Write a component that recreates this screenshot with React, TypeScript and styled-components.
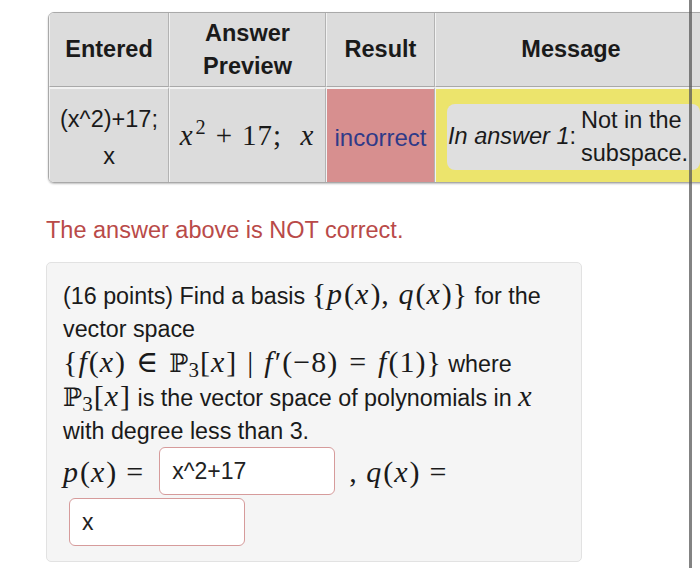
import styled, { createGlobalStyle } from 'styled-components';

const GlobalStyle = createGlobalStyle`
    html, body {
        margin: 0;
        padding: 0;
        background: #fff;
    }
    body {
        font-family: 'Liberation Sans', Arial, sans-serif;
        color: #1a1a1a;
    }
`;

const Page = styled.div`
    position: relative;
    width: 700px;
    height: 577px;
    overflow: hidden;
    padding: 12px 0 0 46px;
    box-sizing: border-box;
`;

// dark page edge that runs over the table on the right
const PageEdge = styled.div`
    position: absolute;
    left: 689px;
    top: 0;
    width: 3px;
    height: 568px;
    background: rgba(90, 90, 90, 0.75);
`;

const ResultsTable = styled.table`
    margin-left: 2px;
    width: 650px;
    border-collapse: separate;
    border-spacing: 0;
    border: 1px solid #a9a9a9;
    border-radius: 6px;
    box-shadow: 0 1px 2px rgba(0, 0, 0, 0.25);
    overflow: hidden;
    font-size: 23.5px;
    table-layout: fixed;
`;

const HeadCell = styled.th<{ $w: number }>`
    width: ${(p) => p.$w}px;
    height: 73px;
    padding: 0;
    background: #dcdcdc;
    font-weight: bold;
    line-height: 33px;
    text-align: center;
    vertical-align: middle;
    border-right: 1px solid #b3b3b3;
    border-left: 1px solid #f2f2f2;
    border-bottom: 1px solid #a9a9a9;

    &:last-child {
        border-right: none;
    }
`;

const Cell = styled.td<{ $tone?: 'plain' | 'bad' | 'warn' }>`
    height: 95px;
    padding: 4px 0 0 0;
    box-sizing: border-box;
    text-align: center;
    vertical-align: middle;
    line-height: 37px;
    border-top: 2px solid #f2f2f2;
    border-right: 1px solid #b3b3b3;
    border-left: 1px solid #f2f2f2;
    background: ${(p) =>
        p.$tone === 'bad' ? '#d78f8f' : p.$tone === 'warn' ? '#ece46c' : '#dcdcdc'};

    &:last-child {
        border-right: none;
    }
`;

const ResultText = styled.span`
    color: #2f3a88;
    font-size: 24px;
`;

const MessageBox = styled.div`
    margin: -2px 6px 0 11px;
    height: 66px;
    border-radius: 8px;
    background: #dfdfdf;
    display: flex;
    align-items: center;
    padding: 0 0 0 1px;
    gap: 5px;
    text-align: left;
    line-height: 33px;
`;

const MessageLabel = styled.span`
    font-style: italic;
`;

const MessageText = styled.span`
    display: block;
`;

const Math = styled.span<{ $size?: number }>`
    font-family: 'Liberation Serif', 'DejaVu Serif', serif;
    font-size: ${(p) => p.$size ?? 30}px;
    letter-spacing: 1px;
    line-height: 0.9;
    white-space: nowrap;
`;

const V = styled.i`
    font-style: italic;
    margin-right: 1px;
`;

const Op = styled.span<{ $space?: number }>`
    margin: 0 ${(p) => p.$space ?? 9}px;
`;

const Sym = styled.span`
    font-family: 'DejaVu Serif', serif;
    font-size: 0.85em;
    letter-spacing: 0;
`;

const Sup = styled.sup`
    font-size: 0.7em;
    vertical-align: 0.55em;
    line-height: 0;
    margin-left: 1px;
`;

const Sub = styled.sub`
    font-size: 0.7em;
    vertical-align: -0.25em;
    line-height: 0;
`;

const Notice = styled.p`
    margin: 31px 0 0 0;
    font-size: 23.5px;
    line-height: 33px;
    color: #b94a48;
`;

const ProblemBox = styled.div`
    margin-top: 15px;
    width: 536px;
    height: 300px;
    box-sizing: border-box;
    padding: 17px 16px 0 16px;
    background: #f5f5f5;
    border: 1px solid #e2e2e2;
    border-radius: 5px;
    font-size: 23.3px;
    line-height: 33px;
`;

const TextLine = styled.div<{ $h?: number }>`
    height: ${(p) => p.$h ?? 33}px;
    line-height: ${(p) => p.$h ?? 33}px;
    white-space: nowrap;
`;

const AnswerRow = styled.div`
    display: flex;
    flex-wrap: wrap;
    align-items: center;
    row-gap: 3px;
    margin-top: -1px;
`;

const AnswerInput = styled.input`
    width: 176px;
    height: 48px;
    box-sizing: border-box;
    padding: 0 12px;
    border: 1px solid #d69b9b;
    border-radius: 6px;
    background: #fff;
    font-family: 'Liberation Sans', Arial, sans-serif;
    font-size: 23px;
    color: #222;
    outline: none;
`;

const Label = styled.span<{ $lead?: number }>`
    display: inline-flex;
    align-items: center;
    margin-left: ${(p) => p.$lead ?? 0}px;
    margin-right: 6px;
`;

const SecondInput = styled(AnswerInput)`
    margin-left: 6px;
`;

export default function App() {
    return (
        <>
            <GlobalStyle />
            <Page>
                <ResultsTable>
                    <thead>
                        <tr>
                            <HeadCell $w={118}>Entered</HeadCell>
                            <HeadCell $w={155}>
                                Answer
                                <br />
                                Preview
                            </HeadCell>
                            <HeadCell $w={107}>Result</HeadCell>
                            <HeadCell $w={270}>Message</HeadCell>
                        </tr>
                    </thead>
                    <tbody>
                        <tr>
                            <Cell>
                                (x^2)+17;
                                <br />x
                            </Cell>
                            <Cell>
                                <Math $size={29}>
                                    <V>x</V>
                                    <Sup>2</Sup>
                                    <Op>+</Op>17;<Op $space={5}> </Op>
                                    <V>x</V>
                                </Math>
                            </Cell>
                            <Cell $tone="bad">
                                <ResultText>incorrect</ResultText>
                            </Cell>
                            <Cell $tone="warn">
                                <MessageBox>
                                    <MessageLabel>
                                        In answer 1<span style={{ fontStyle: 'normal' }}>:</span>
                                    </MessageLabel>
                                    <MessageText>
                                        Not in the
                                        <br />
                                        subspace.
                                    </MessageText>
                                </MessageBox>
                            </Cell>
                        </tr>
                    </tbody>
                </ResultsTable>

                <Notice>The answer above is NOT correct.</Notice>

                <ProblemBox>
                    <TextLine>
                        (16 points) Find a basis{' '}
                        <Math>
                            {'{'}
                            <V>p</V>(<V>x</V>), <V>q</V>(<V>x</V>){'}'}
                        </Math>{' '}
                        for the
                    </TextLine>
                    <TextLine>vector space</TextLine>
                    <TextLine $h={36}>
                        <Math>
                            {'{'}
                            <V>f</V>(<V>x</V>)<Op $space={10}>∈</Op>
                            <Sym>ℙ</Sym>
                            <Sub>3</Sub>[<V>x</V>]<Op $space={10}>|</Op>
                            <V>f</V>′(−8)<Op $space={11}>=</Op>
                            <V>f</V>(1){'}'}
                        </Math>{' '}
                        where
                    </TextLine>
                    <TextLine $h={33}>
                        <Math>
                            <Sym>ℙ</Sym>
                            <Sub>3</Sub>[<V>x</V>]
                        </Math>{' '}
                        is the vector space of polynomials in{' '}
                        <Math>
                            <V>x</V>
                        </Math>
                    </TextLine>
                    <TextLine>with degree less than 3.</TextLine>
                    <AnswerRow>
                        <Label>
                            <Math>
                                <V>p</V>(<V>x</V>)<Op>=</Op>
                            </Math>
                        </Label>
                        <AnswerInput defaultValue="x^2+17" />
                        <Label $lead={14}>
                            <Math>
                                , <V>q</V>(<V>x</V>)<Op>=</Op>
                            </Math>
                        </Label>
                        <SecondInput defaultValue="x" />
                    </AnswerRow>
                </ProblemBox>
                <PageEdge />
            </Page>
        </>
    );
}
